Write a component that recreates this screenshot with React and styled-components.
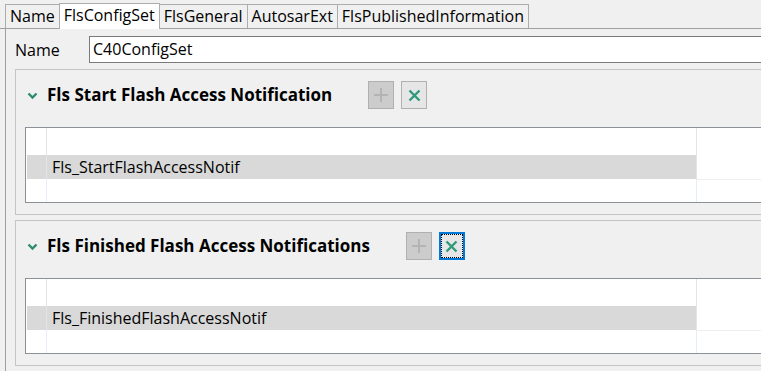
import React from "react";
import styled, { createGlobalStyle } from "styled-components";

const GlobalStyle = createGlobalStyle`
  html, body {
    margin: 0;
    padding: 0;
    background: #f0f0f0;
    overflow: hidden;
  }
  body {
    font-family: "Open Sans", "Noto Sans", sans-serif;
    color: #000;
  }
`;

const Page = styled.div`
  width: 900px;
  height: 371px;
`;

const TabStrip = styled.div`
  display: flex;
  align-items: flex-end;
  height: 29px;
  box-sizing: border-box;
  padding-left: 5px;
  border-bottom: 1px solid #a0a0a0;
`;

const Tab = styled.div`
  box-sizing: border-box;
  height: ${(p) => (p.active ? "26px" : "24px")};
  margin-bottom: ${(p) => (p.active ? "-1px" : "0")};
  margin-left: -1px;
  padding: 0 4px;
  border: 1px solid #adadad;
  border-bottom: none;
  background: ${(p) => (p.active ? "#ffffff" : "#f0f0f0")};
  font-size: 16px;
  line-height: 22px;
  white-space: nowrap;
  position: relative;
  z-index: ${(p) => (p.active ? 1 : 0)};
  &:first-child {
    margin-left: 0;
  }
`;

const Panel = styled.div`
  margin-left: 5px;
  border-left: 1px solid #a0a0a0;
  padding: 7px 0 0 9px;
  height: 342px;
  box-sizing: border-box;
`;

const NameRow = styled.div`
  display: grid;
  grid-template-columns: 74px 1fr;
  align-items: center;
  margin-bottom: 6px;
`;

const Label = styled.div`
  font-size: 16px;
`;

const TextBox = styled.div`
  box-sizing: border-box;
  height: 27px;
  border: 1px solid #7a7a7a;
  background: #fff;
  padding-left: 3px;
  font-size: 16px;
  line-height: 24px;
`;

const Section = styled.div`
  border: 1px solid #c4c4c4;
  padding: 11px 0 11px 9px;
  margin-bottom: 5px;
`;

const Header = styled.div`
  display: flex;
  align-items: center;
  height: 28px;
  margin-bottom: 18px;
  padding-left: 2px;
`;

const Chevron = styled.svg`
  width: 11px;
  height: 8px;
  margin-right: 9px;
  margin-top: 1px;
`;

const Title = styled.div`
  font-size: 17px;
  font-weight: 700;
  white-space: nowrap;
  margin-top: -2px;
`;

const Buttons = styled.div`
  display: flex;
  gap: 7px;
  margin-left: 36px;
`;

const IconButton = styled.div`
  box-sizing: border-box;
  width: 26px;
  height: 28px;
  display: flex;
  align-items: center;
  justify-content: center;
  border: ${(p) => (p.focused ? "2px solid #0078d7" : "1px solid #b0b0b0")};
  background: ${(p) => (p.disabled ? "#cccccc" : "#e6e6e6")};
  position: relative;
  ${(p) =>
    p.focused &&
    `
    &::after {
      content: "";
      position: absolute;
      inset: 0;
      border: 1px dotted #000;
    }
  `}
`;

const Table = styled.div`
  box-sizing: border-box;
  height: 76px;
  border: 1px solid #8c9099;
  background: #fff;
  padding-left: 1px;
  display: flex;
  flex-direction: column;
`;

const Row = styled.div`
  display: grid;
  grid-template-columns: 20px 650px 1fr;
  height: ${(p) => p.h}px;
  flex: ${(p) => (p.fill ? "1" : "none")};
`;

const Cell = styled.div`
  box-sizing: border-box;
  background: ${(p) => (p.selected ? "#d9d9d9" : "transparent")};
  border-right: ${(p) => (p.sep ? `1px solid ${p.sep}` : "none")};
  border-top: ${(p) => (p.topLine ? "1px solid #eeeeee" : "none")};
  font-size: 16px;
  line-height: 24px;
  padding-left: ${(p) => (p.text ? "5px" : "0")};
  white-space: nowrap;
`;

const ChevronIcon = () => (
  <Chevron viewBox="0 0 11 8">
    <path d="M1.5 1.5 L5.5 5.5 L9.5 1.5" fill="none" stroke="#2e8b72" strokeWidth="2.4" />
  </Chevron>
);

const PlusIcon = () => (
  <svg width="16" height="16" viewBox="0 0 16 16">
    <path d="M8 1 V15 M1 8 H15" stroke="#b4b4b4" strokeWidth="2" />
  </svg>
);

const CrossIcon = () => (
  <svg width="13" height="13" viewBox="0 0 13 13">
    <path d="M1.5 1.5 L11.5 11.5 M11.5 1.5 L1.5 11.5" stroke="#2e9a7b" strokeWidth="2.4" />
  </svg>
);

const NotifSection = ({ title, item, focused }) => (
  <Section>
    <Header>
      <ChevronIcon />
      <Title>{title}</Title>
      <Buttons>
        <IconButton disabled>
          <PlusIcon />
        </IconButton>
        <IconButton focused={focused}>
          <CrossIcon />
        </IconButton>
      </Buttons>
    </Header>
    <Table>
      <Row h={27}>
        <Cell sep="#e4e4e4" />
        <Cell sep="#e4e4e4" />
        <Cell />
      </Row>
      <Row h={24}>
        <Cell selected sep="#e4e4e4" />
        <Cell selected text sep="#e4e4e4">{item}</Cell>
        <Cell />
      </Row>
      <Row fill>
        <Cell sep="#e6eefa" />
        <Cell sep="#e6eefa" />
        <Cell topLine />
      </Row>
    </Table>
  </Section>
);

const tabs = ["Name", "FlsConfigSet", "FlsGeneral", "AutosarExt", "FlsPublishedInformation"];

export default function App() {
  return (
    <Page>
      <GlobalStyle />
      <TabStrip>
        {tabs.map((t) => (
          <Tab key={t} active={t === "FlsConfigSet"}>
            {t}
          </Tab>
        ))}
      </TabStrip>
      <Panel>
        <NameRow>
          <Label>Name</Label>
          <TextBox>C40ConfigSet</TextBox>
        </NameRow>
        <NotifSection
          title="Fls Start Flash Access Notification"
          item="Fls_StartFlashAccessNotif"
        />
        <NotifSection
          title="Fls Finished Flash Access Notifications"
          item="Fls_FinishedFlashAccessNotif"
          focused
        />
      </Panel>
    </Page>
  );
}
